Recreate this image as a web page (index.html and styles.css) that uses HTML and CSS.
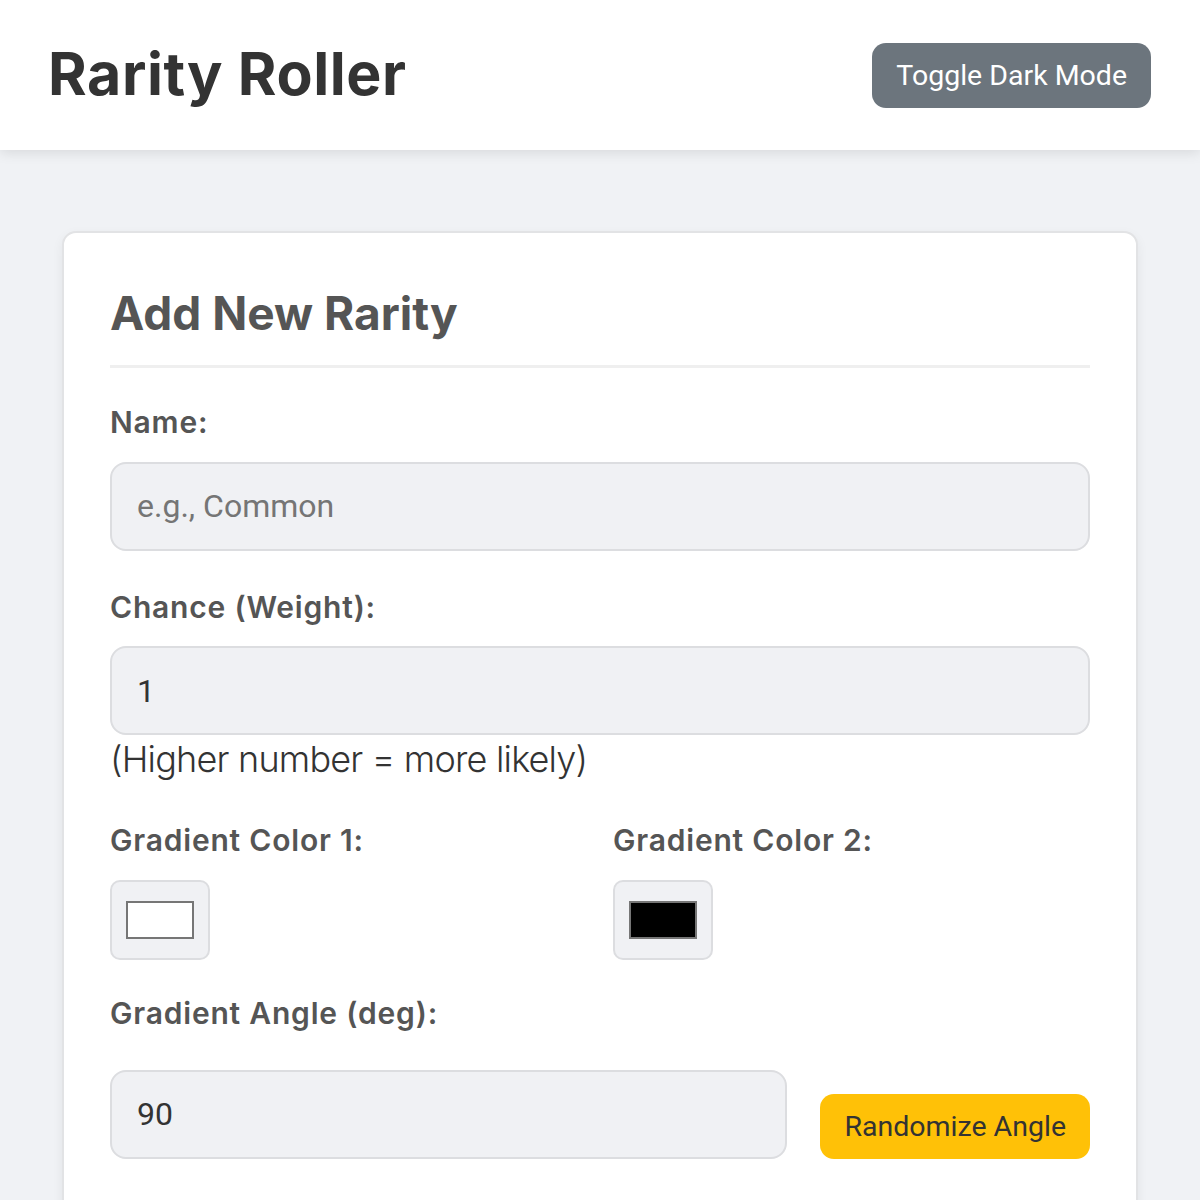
FILE: index.html
```html
<!DOCTYPE html>
<html lang="en">
<head>
<meta charset="utf-8">
<title>Rarity Roller</title>
<link rel="stylesheet" href="styles.css">
</head>
<body>
<header class="topbar">
  <h1 class="title">Rarity Roller</h1>
  <button class="btn btn-toggle" type="button">Toggle Dark Mode</button>
</header>
<main class="page">
  <section class="card">
    <h2 class="card-title">Add New Rarity</h2>
    <div class="field field-name">
      <label class="label" for="name">Name:</label>
      <input class="input" id="name" type="text" placeholder="e.g., Common">
    </div>
    <div class="field field-chance">
      <label class="label" for="chance">Chance (Weight):</label>
      <input class="input" id="chance" type="text" value="1">
      <p class="hint">(Higher number = more likely)</p>
    </div>
    <div class="colors">
      <div class="field">
        <label class="label">Gradient Color 1:</label>
        <div class="color-box"><span class="swatch swatch-white"></span></div>
      </div>
      <div class="field">
        <label class="label">Gradient Color 2:</label>
        <div class="color-box"><span class="swatch swatch-black"></span></div>
      </div>
    </div>
    <div class="field">
      <label class="label label-angle" for="angle">Gradient Angle (deg):</label>
      <div class="angle-row">
        <input class="input angle-input" id="angle" type="text" value="90">
        <button class="btn btn-random" type="button">Randomize Angle</button>
      </div>
    </div>
  </section>
</main>
</body>
</html>
```
FILE: styles.css
```css
* { box-sizing: border-box; }
html, body { margin: 0; padding: 0; }
body {
  background: #f0f2f5;
  font-family: Inter, "Open Sans", sans-serif;
  color: #333;
}
.topbar {
  height: 150px;
  background: #fff;
  display: flex;
  align-items: center;
  justify-content: space-between;
  padding: 0 49px 0 48px;
  box-shadow: 0 3px 12px rgba(0,0,0,0.1);
  position: relative;
}
.title {
  margin: 0 0 4px;
  font-family: Inter, sans-serif;
  font-weight: 700;
  font-size: 59px;
  letter-spacing: 0.6px;
  color: #333;
  line-height: 1;
}
.btn {
  border: none;
  font-family: Roboto, sans-serif;
  font-size: 28.5px;
  border-radius: 14px;
  cursor: pointer;
  height: 65px;
  padding: 0 24px;
  white-space: nowrap;
}
.btn-toggle {
  background: #6c757d;
  color: #fff;
}
.page {
  padding: 81px 62px 40px;
}
.card {
  background: #fff;
  border: 2px solid #e2e3e5;
  border-radius: 14px;
  box-shadow: 0 4px 12px rgba(0,0,0,0.06);
  padding: 53px 46px 60px;
}
.card-title {
  margin: 0 0 32px;
  font-family: Inter, sans-serif;
  font-weight: 700;
  font-size: 46px;
  color: #555;
  padding-bottom: 24px;
  border-bottom: 3px solid #efefef;
  line-height: 1.2;
}
.field { display: flex; flex-direction: column; }
.label {
  font-family: Inter, sans-serif;
  font-weight: 600;
  font-size: 30px;
  letter-spacing: 0.8px;
  color: #555;
  line-height: 45px;
  margin-bottom: 16.5px;
}
.input {
  height: 89px;
  background: #f0f1f4;
  border: 2px solid #dcdde0;
  border-radius: 16px;
  padding: 0 25px;
  font-family: Roboto, sans-serif;
  font-size: 32px;
  color: #333;
}
.input::placeholder { color: #757575; }
.field-name { margin-bottom: 34px; }
.hint {
  margin: 1px 0 35.4px;
  font-family: Inter, sans-serif;
  font-weight: 300;
  font-size: 36px;
  letter-spacing: -0.8px;
  color: #333;
  line-height: 46.8px;
}
.colors {
  display: grid;
  grid-template-columns: 1fr 1fr;
  column-gap: 26px;
  margin-bottom: 31.4px;
}
.color-box {
  width: 100px;
  height: 80px;
  background: #f0f1f4;
  border: 2px solid #dcdde0;
  border-radius: 10px;
  display: flex;
  align-items: center;
  justify-content: center;
}
.swatch {
  width: 68px;
  height: 38px;
  border: 2px solid #767676;
}
.swatch-white { background: #fff; }
.swatch-black { background: #000; }
.label-angle { margin-bottom: 33.6px; }
.angle-row {
  display: flex;
  align-items: flex-end;
  gap: 33px;
}
.angle-input { flex: 1; min-width: 0; }
.btn-random {
  background: #ffc107;
  color: #333;
}
```
